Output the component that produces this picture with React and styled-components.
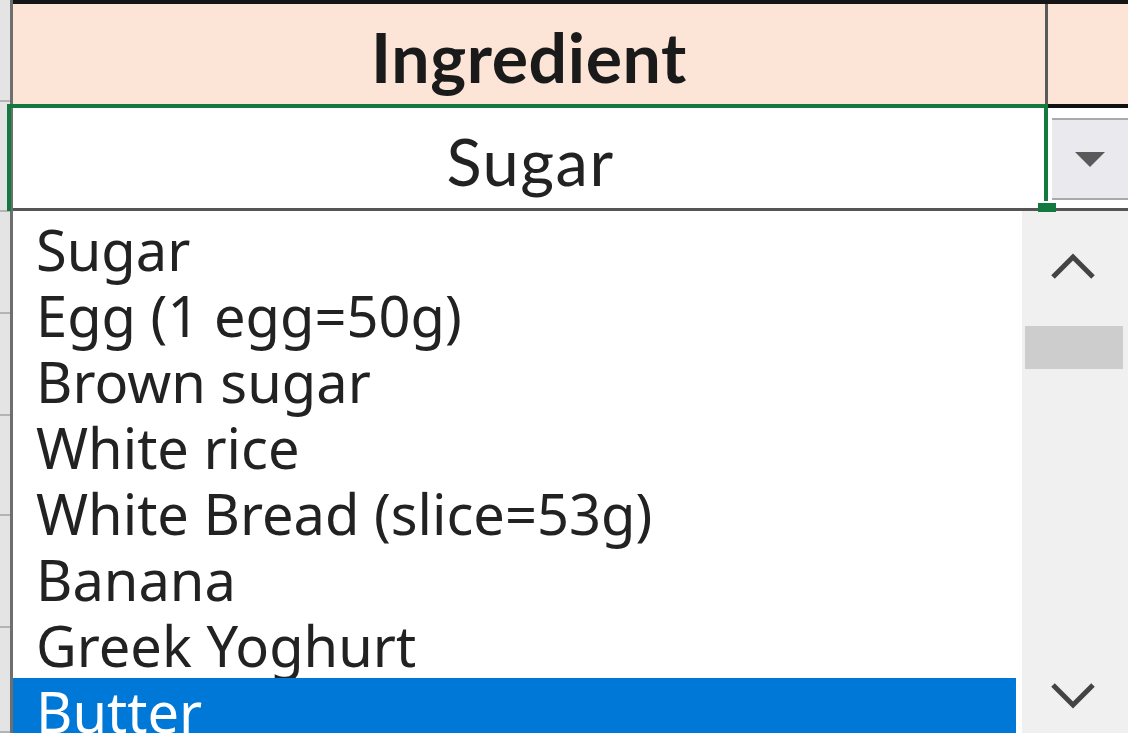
import React from 'react'
import styled, { createGlobalStyle } from 'styled-components'

const ITEMS = [
  'Sugar',
  'Egg (1 egg=50g)',
  'Brown sugar',
  'White rice',
  'White Bread (slice=53g)',
  'Banana',
  'Greek Yoghurt',
  'Butter',
]

const ROW_TICKS = [100, 108, 100, 100, 98, 110, 103]

function Chevron({ down }) {
  return (
    <svg width="48" height="30" viewBox="0 0 48 30">
      <polyline
        points={down ? '4,5 24,25 44,5' : '4,25 24,5 44,25'}
        fill="none"
        stroke="#444"
        strokeWidth="5"
      />
    </svg>
  )
}

export default function App() {
  return (
    <Page>
      <GlobalStyle />
      <RowHeaders>
        {ROW_TICKS.map((h, i) => (
          <RowTick key={i} h={h} />
        ))}
      </RowHeaders>
      <Sheet>
        <HeaderRow>
          <HeaderCell>Ingredient</HeaderCell>
          <ColLine />
          <HeaderCell />
        </HeaderRow>
        <EditRow>
          <ActiveCell>
            Sugar
            <FillHandle />
          </ActiveCell>
          <ButtonCell>
            <DropButton>
              <Triangle />
            </DropButton>
          </ButtonCell>
        </EditRow>
        <ListArea>
          <List>
            {ITEMS.map((item, i) => (
              <Item key={item} selected={i === ITEMS.length - 1}>
                {item}
              </Item>
            ))}
          </List>
          <Scrollbar>
            <ArrowButton>
              <Chevron />
            </ArrowButton>
            <Thumb />
            <Track />
            <ArrowButton>
              <Chevron down />
            </ArrowButton>
          </Scrollbar>
        </ListArea>
      </Sheet>
    </Page>
  )
}

const GlobalStyle = createGlobalStyle`
  html, body {
    margin: 0;
    padding: 0;
    background: #fff;
  }
`
const Page = styled.div`
  width: 1140px;
  height: 733px;
  overflow: hidden;
  display: flex;
  align-items: flex-start;
  background: #fff;
`
const RowHeaders = styled.div`
  width: 10px;
  height: 760px;
  flex-shrink: 0;
  background: #e4e4e4;
  border-right: 3px solid #6e6e6e;
  display: flex;
  flex-direction: column;
`
const RowTick = styled.div`
  height: ${p => p.h}px;
  flex-shrink: 0;
  border-bottom: 2px solid #b4b4b4;
`
const Sheet = styled.div`
  width: 1115px;
  flex-shrink: 0;
  display: flex;
  flex-direction: column;
`
const HeaderRow = styled.div`
  height: 100px;
  flex-shrink: 0;
  border-top: 4px solid #151515;
  background: #fce4d6;
  display: grid;
  grid-template-columns: 1032px 3px 1fr;
`
const HeaderCell = styled.div`
  display: flex;
  align-items: center;
  justify-content: center;
  padding-top: 4px;
  font-family: Lato, "Liberation Sans", sans-serif;
  font-weight: 700;
  font-size: 68px;
  letter-spacing: 0.6px;
  color: #1a1a1a;
`
const ColLine = styled.div`
  background: #5a5a5a;
`
const EditRow = styled.div`
  height: 104px;
  flex-shrink: 0;
  border-bottom: 3px solid #555;
  display: grid;
  grid-template-columns: 1035px 1fr;
`
const ActiveCell = styled.div`
  position: relative;
  display: flex;
  align-items: center;
  justify-content: center;
  padding-top: 10px;
  font-family: Lato, "Liberation Sans", sans-serif;
  font-size: 65px;
  letter-spacing: 1.5px;
  color: #222;
  &::after {
    content: '';
    position: absolute;
    top: 0;
    left: -6px;
    right: 0;
    bottom: -3px;
    border: 4px solid #137a3f;
    border-bottom: none;
    pointer-events: none;
  }
`
const FillHandle = styled.div`
  position: absolute;
  right: -8px;
  bottom: -4px;
  width: 18px;
  height: 9px;
  background: #137a3f;
  border-top: 2px solid #fff;
  z-index: 2;
`
const ButtonCell = styled.div`
  border-top: 4px solid #111;
  padding: 10px 0 8px 4px;
  display: flex;
`
const DropButton = styled.div`
  flex: 1;
  background: #e9e9ee;
  border-top: 2px solid #a9a9a9;
  border-bottom: 2px solid #a9a9a9;
  display: flex;
  align-items: center;
  justify-content: center;
`
const Triangle = styled.div`
  width: 0;
  height: 0;
  border-left: 15px solid transparent;
  border-right: 15px solid transparent;
  border-top: 15px solid #5a5a5a;
`
const ListArea = styled.div`
  height: 540px;
  flex-shrink: 0;
  display: grid;
  grid-template-columns: 1009px 1fr;
`
const List = styled.div`
  background: #fff;
  padding-top: 5px;
  display: flex;
  flex-direction: column;
`
const Item = styled.div`
  height: 66px;
  flex-shrink: 0;
  line-height: 66px;
  padding-left: 23px;
  margin-right: 6px;
  font-family: "Noto Sans", "Open Sans", sans-serif;
  font-size: 56px;
  white-space: nowrap;
  color: ${p => (p.selected ? '#fff' : '#222')};
  background: ${p => (p.selected ? '#0078d7' : 'transparent')};
`
const Scrollbar = styled.div`
  background: #f0f0f0;
  display: flex;
  flex-direction: column;
`
const ArrowButton = styled.div`
  height: 112px;
  flex-shrink: 0;
  display: flex;
  align-items: center;
  justify-content: center;
  padding-right: 4px;
`
const Thumb = styled.div`
  height: 43px;
  flex-shrink: 0;
  margin: 3px 5px 0 3px;
  background: #cdcdcd;
`
const Track = styled.div`
  flex: 1;
`
